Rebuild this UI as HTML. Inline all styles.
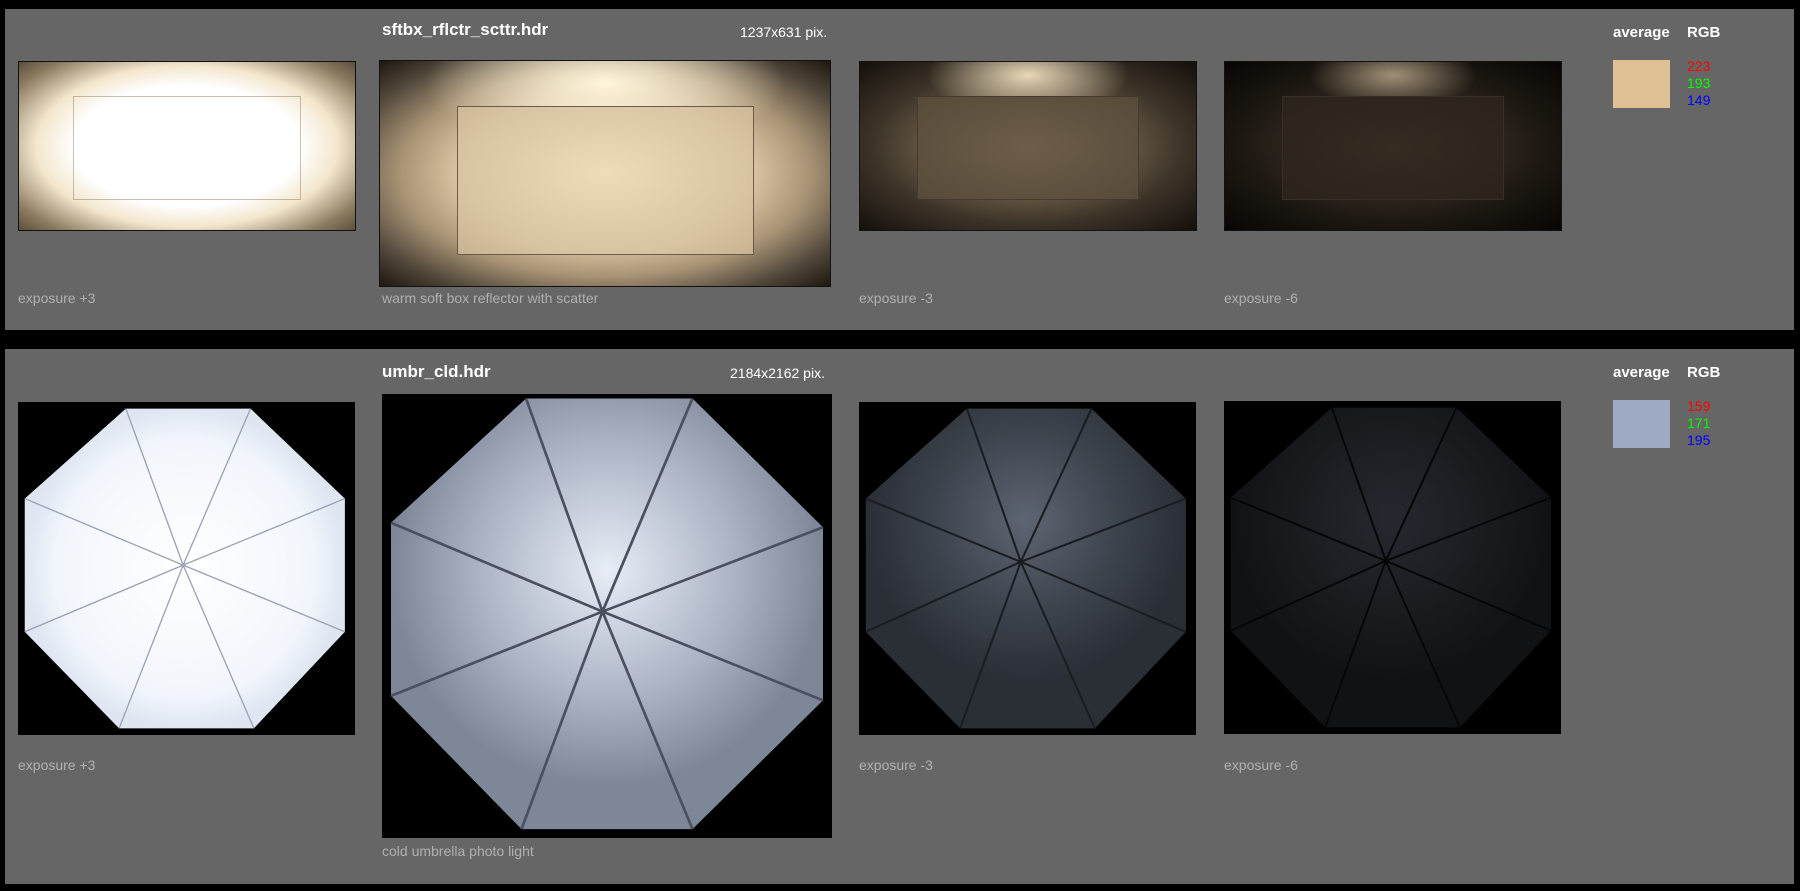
<!DOCTYPE html>
<html><head><meta charset="utf-8"><style>
body{margin:0;width:1800px;height:891px;background:#000;position:relative;overflow:hidden;font-family:"Liberation Sans",sans-serif}
.p{position:absolute;left:5px;width:1789px;background:#666}
.a{position:absolute}
.t{color:#fff;font-weight:bold;font-size:17px}
.d{color:#fff;font-size:14px}
.c{color:#b0b0b0;font-size:14px}
.n{font-size:14px;line-height:17px}
.sb{position:absolute;overflow:hidden;border:1px solid #111}
.sb .in{position:absolute;left:22%;top:20%;right:22%;bottom:18%;border:1px solid rgba(60,50,40,.7)}
svg{position:absolute;display:block}
</style></head><body>
<div class="p" style="top:9px;height:321px"></div>
<div class="p" style="top:349px;height:535px"></div>

<div class="a t" style="left:382px;top:20px">sftbx_rflctr_scttr.hdr</div>
<div class="a d" style="left:740px;top:24px">1237x631 pix.</div>
<div class="a t" style="left:1613px;top:24px;font-size:15px">average</div>
<div class="a t" style="left:1687px;top:24px;font-size:15px">RGB</div>
<div class="a" style="left:1613px;top:60px;width:57px;height:48px;background:#dfc195"></div>
<div class="a n" style="left:1687px;top:58px"><div style="color:#f00">223</div><div style="color:#0f0">193</div><div style="color:#00f">149</div></div>

<div class="sb" style="left:18px;top:61px;width:336px;height:168px;background:radial-gradient(ellipse 75% 80% at 50% 50%,#fff 45%,#f3e6cc 60%,#8a7a60 80%,#3a3020 100%)"><div class="in" style="left:16%;right:16%;border-color:rgba(120,100,70,.4)"></div></div>
<div class="sb" style="left:379px;top:60px;width:450px;height:225px;background:radial-gradient(ellipse 40% 30% at 50% 10%,#fff6dc,rgba(255,240,210,0) 100%),radial-gradient(ellipse 70% 70% at 50% 50%,#ddc7a5 45%,#a99375 65%,#50473a 85%,#201a12 100%)"><div class="in" style="left:17%;right:17%;top:20%;bottom:14%;background:radial-gradient(ellipse at 50% 45%,#eedcb8,#d8c3a2 70%,#c8b292)"></div></div>
<div class="sb" style="left:859px;top:61px;width:336px;height:168px;background:radial-gradient(ellipse 30% 25% at 50% 8%,#e8d8b8,rgba(0,0,0,0)),radial-gradient(ellipse 70% 70% at 50% 50%,#685a47 40%,#3e3529 65%,#14100b 100%)"><div class="in" style="left:17%;right:17%;background:radial-gradient(ellipse,#6c5e49,#574a39)"></div></div>
<div class="sb" style="left:1224px;top:61px;width:336px;height:168px;background:radial-gradient(ellipse 25% 20% at 50% 8%,#a09078,rgba(0,0,0,0)),radial-gradient(ellipse 70% 70% at 50% 50%,#302820 40%,#1c1711 65%,#080604 100%)"><div class="in" style="left:17%;right:17%;background:radial-gradient(ellipse,#342b21,#2a231a)"></div></div>

<div class="a c" style="left:18px;top:290px">exposure +3</div>
<div class="a c" style="left:382px;top:290px">warm soft box reflector with scatter</div>
<div class="a c" style="left:859px;top:290px">exposure -3</div>
<div class="a c" style="left:1224px;top:290px">exposure -6</div>

<div class="a t" style="left:382px;top:362px">umbr_cld.hdr</div>
<div class="a d" style="left:730px;top:365px">2184x2162 pix.</div>
<div class="a t" style="left:1613px;top:364px;font-size:15px">average</div>
<div class="a t" style="left:1687px;top:364px;font-size:15px">RGB</div>
<div class="a" style="left:1613px;top:400px;width:57px;height:48px;background:#9eaac3"></div>
<div class="a n" style="left:1687px;top:398px"><div style="color:#f00">159</div><div style="color:#0f0">171</div><div style="color:#00f">195</div></div>

<svg width="0" height="0"><defs>
<radialGradient id="g1"><stop offset="0" stop-color="#fff"/><stop offset="0.8" stop-color="#f2f6fc"/><stop offset="1" stop-color="#dfe6f2"/></radialGradient>
<radialGradient id="g2" cx="0.5" cy="0.4"><stop offset="0" stop-color="#e8edf6"/><stop offset="0.6" stop-color="#aab3c4"/><stop offset="1" stop-color="#7e8798"/></radialGradient>
<radialGradient id="g3" cx="0.5" cy="0.35"><stop offset="0" stop-color="#5d6572"/><stop offset="0.6" stop-color="#3c424c"/><stop offset="1" stop-color="#2a2e35"/></radialGradient>
<radialGradient id="g4" cx="0.5" cy="0.35"><stop offset="0" stop-color="#25292f"/><stop offset="0.6" stop-color="#191b1f"/><stop offset="1" stop-color="#111214"/></radialGradient>
</defs></svg>

<svg style="left:18px;top:402px;width:337px;height:333px;background:#000" viewBox="0 0 100 100" preserveAspectRatio="none"><polygon points="97,29 69,2 32,2 2,29 2,69 30,98 70,98 97,69" fill="url(#g1)"/><g stroke="#9aa3b5" stroke-width="0.4"><line x1="49" y1="49" x2="97" y2="29"/><line x1="49" y1="49" x2="69" y2="2"/><line x1="49" y1="49" x2="32" y2="2"/><line x1="49" y1="49" x2="2" y2="29"/><line x1="49" y1="49" x2="2" y2="69"/><line x1="49" y1="49" x2="30" y2="98"/><line x1="49" y1="49" x2="70" y2="98"/><line x1="49" y1="49" x2="97" y2="69"/></g></svg>
<svg style="left:382px;top:394px;width:450px;height:444px;background:#000" viewBox="0 0 100 100" preserveAspectRatio="none"><polygon points="98,30 69,1 32,1 2,29 2,68 31,98 69,98 98,69" fill="url(#g2)"/><g stroke="#4a5060" stroke-width="0.6"><line x1="49" y1="49" x2="98" y2="30"/><line x1="49" y1="49" x2="69" y2="1"/><line x1="49" y1="49" x2="32" y2="1"/><line x1="49" y1="49" x2="2" y2="29"/><line x1="49" y1="49" x2="2" y2="68"/><line x1="49" y1="49" x2="31" y2="98"/><line x1="49" y1="49" x2="69" y2="98"/><line x1="49" y1="49" x2="98" y2="69"/></g></svg>
<svg style="left:859px;top:402px;width:337px;height:333px;background:#000" viewBox="0 0 100 100" preserveAspectRatio="none"><polygon points="97,29 69,2 32,2 2,29 2,69 30,98 70,98 97,69" fill="url(#g3)"/><g stroke="#1a1c20" stroke-width="0.6"><line x1="48" y1="48" x2="97" y2="29"/><line x1="48" y1="48" x2="69" y2="2"/><line x1="48" y1="48" x2="32" y2="2"/><line x1="48" y1="48" x2="2" y2="29"/><line x1="48" y1="48" x2="2" y2="69"/><line x1="48" y1="48" x2="30" y2="98"/><line x1="48" y1="48" x2="70" y2="98"/><line x1="48" y1="48" x2="97" y2="69"/></g></svg>
<svg style="left:1224px;top:401px;width:337px;height:333px;background:#000" viewBox="0 0 100 100" preserveAspectRatio="none"><polygon points="97,29 69,2 32,2 2,29 2,69 30,98 70,98 97,69" fill="url(#g4)"/><g stroke="#060607" stroke-width="0.6"><line x1="48" y1="48" x2="97" y2="29"/><line x1="48" y1="48" x2="69" y2="2"/><line x1="48" y1="48" x2="32" y2="2"/><line x1="48" y1="48" x2="2" y2="29"/><line x1="48" y1="48" x2="2" y2="69"/><line x1="48" y1="48" x2="30" y2="98"/><line x1="48" y1="48" x2="70" y2="98"/><line x1="48" y1="48" x2="97" y2="69"/></g></svg>

<div class="a c" style="left:18px;top:757px">exposure +3</div>
<div class="a c" style="left:859px;top:757px">exposure -3</div>
<div class="a c" style="left:1224px;top:757px">exposure -6</div>
<div class="a c" style="left:382px;top:843px">cold umbrella photo light</div>
</body></html>
